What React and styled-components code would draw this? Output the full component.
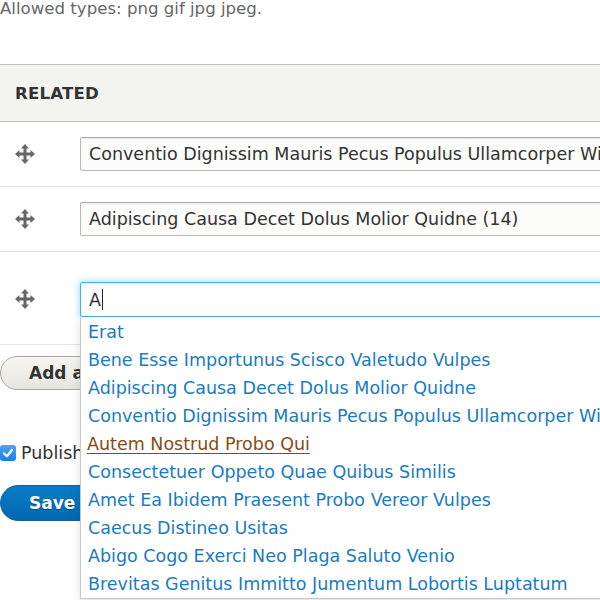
import React from "react";
import styled, { createGlobalStyle } from "styled-components";

const GlobalStyle = createGlobalStyle`
  html, body {
    margin: 0;
    padding: 0;
    width: 600px;
    height: 600px;
    overflow: hidden;
    background: #fff;
  }
  body {
    font-family: "DejaVu Sans", "Lucida Grande", sans-serif;
    color: #333;
  }
`;

const related = [
  "Conventio Dignissim Mauris Pecus Populus Ullamcorper Wisi (23)",
  "Adipiscing Causa Decet Dolus Molior Quidne (14)",
];

const suggestions = [
  "Erat",
  "Bene Esse Importunus Scisco Valetudo Vulpes",
  "Adipiscing Causa Decet Dolus Molior Quidne",
  "Conventio Dignissim Mauris Pecus Populus Ullamcorper Wisi",
  "Autem Nostrud Probo Qui",
  "Consectetuer Oppeto Quae Quibus Similis",
  "Amet Ea Ibidem Praesent Probo Vereor Vulpes",
  "Caecus Distineo Usitas",
  "Abigo Cogo Exerci Neo Plaga Saluto Venio",
  "Brevitas Genitus Immitto Jumentum Lobortis Luptatum",
];

function DragIcon() {
  return (
    <svg width="20" height="20" viewBox="0 0 20 20">
      <g fill="#666">
        <rect x="8.5" y="3" width="3" height="14" />
        <rect x="3" y="8.5" width="14" height="3" />
        <polygon points="10,0 14,4.5 6,4.5" />
        <polygon points="10,20 14,15.5 6,15.5" />
        <polygon points="0,10 4.5,6 4.5,14" />
        <polygon points="20,10 15.5,6 15.5,14" />
      </g>
    </svg>
  );
}

export default function App() {
  return (
    <>
      <GlobalStyle />
      <Page>
        <Description>Allowed types: png gif jpg jpeg.</Description>
        <Table>
          <Header>RELATED</Header>
          {related.map((title) => (
            <Row key={title}>
              <Handle>
                <DragIcon />
              </Handle>
              <Field>{title}</Field>
            </Row>
          ))}
          <Row $tall>
            <Handle>
              <DragIcon />
            </Handle>
            <FieldWrap>
              <Field $focused>
                A<Caret />
              </Field>
              <Suggestions>
                {suggestions.map((s, i) => (
                  <Suggestion key={s} $hover={i === 4}>
                    {s}
                  </Suggestion>
                ))}
              </Suggestions>
            </FieldWrap>
          </Row>
        </Table>
        <Actions>
          <Button>Add another item</Button>
        </Actions>
        <CheckRow>
          <Checkbox>
            <svg width="12" height="12" viewBox="0 0 12 12">
              <path d="M2 6.5 L5 9.2 L10 2.8" fill="none" stroke="#fff" strokeWidth="2.2" strokeLinecap="round" strokeLinejoin="round" />
            </svg>
          </Checkbox>
          <CheckLabel>Published</CheckLabel>
        </CheckRow>
        <Button $primary>Save</Button>
      </Page>
    </>
  );
}

const Page = styled.div`
  width: 760px;
`;

const Description = styled.div`
  font-size: 16.6px;
  line-height: 18px;
  color: #666;
`;

const Table = styled.div`
  margin-top: 46px;
  border-top: 1px solid #bfbfba;
`;

const Header = styled.div`
  height: 56px;
  display: flex;
  align-items: center;
  padding-left: 15px;
  background: #f3f3f0;
  border-bottom: 1px solid #bfbfba;
  font-size: 16.6px;
  font-weight: bold;
  color: #333;
  letter-spacing: 0.2px;
`;

const Row = styled.div`
  display: flex;
  align-items: ${(p) => (p.$tall ? "flex-start" : "center")};
  padding: ${(p) => (p.$tall ? "30px 0 27px" : "15px 0")};
  border-bottom: 1px solid #e6e4df;
`;

const Handle = styled.div`
  width: 80px;
  display: flex;
  padding-left: 15px;
  box-sizing: border-box;
  align-items: center;
  height: 34px;
`;

const FieldWrap = styled.div`
  position: relative;
`;

const Field = styled.div`
  box-sizing: border-box;
  width: 640px;
  height: ${(p) => (p.$focused ? "35px" : "34px")};
  display: flex;
  align-items: center;
  padding-left: 8px;
  white-space: nowrap;
  overflow: hidden;
  font-size: 17.5px;
  color: #333;
  background: ${(p) => (p.$focused ? "#fff" : "#fcfcfa")};
  border: 1px solid ${(p) => (p.$focused ? "#40b0f0" : "#b8b8b8")};
  border-top-color: ${(p) => (p.$focused ? "#40b0f0" : "#a8a8a8")};
  border-radius: 2px;
  box-shadow: ${(p) =>
    p.$focused
      ? "0 0 6px 1px rgba(64, 176, 240, 0.45)"
      : "inset 0 1px 2px rgba(0, 0, 0, 0.08)"};
`;

const Caret = styled.span`
  display: inline-block;
  width: 1px;
  height: 21px;
  margin-left: 1px;
  background: #222;
`;

const Suggestions = styled.ul`
  position: absolute;
  top: 35px;
  left: 0;
  width: 640px;
  margin: 0;
  padding: 1px 0 0;
  list-style: none;
  background: #fff;
  border: 1px solid #c8c8c8;
  border-top: none;
  box-shadow: 0 4px 10px rgba(0, 0, 0, 0.12);
  z-index: 10;
`;

const Suggestion = styled.li`
  height: 28px;
  line-height: 28px;
  padding-left: ${(p) => (p.$hover ? "6px" : "7px")};
  font-size: 17.5px;
  white-space: nowrap;
  color: ${(p) => (p.$hover ? "#8a4b13" : "#1a7bc2")};
  text-decoration: ${(p) => (p.$hover ? "underline" : "none")};
  text-underline-offset: 3px;
`;

const Actions = styled.div`
  padding-top: 11px;
`;

const Button = styled.div`
  display: inline-flex;
  align-items: center;
  box-sizing: border-box;
  height: ${(p) => (p.$primary ? "36px" : "34px")};
  padding: 0 28px;
  margin-top: ${(p) => (p.$primary ? "22px" : "0")};
  border-radius: 20px;
  font-size: 17px;
  font-weight: bold;
  color: ${(p) => (p.$primary ? "#fff" : "#333")};
  background: ${(p) =>
    p.$primary
      ? "linear-gradient(#0a7bc8, #0069b0)"
      : "linear-gradient(#f6f5f1, #e6e5df)"};
  border: 1px solid ${(p) => (p.$primary ? "#1e5c90" : "#a6a6a6")};
  text-shadow: ${(p) => (p.$primary ? "0 1px 0 #0b4a7a" : "0 1px 0 #fff")};
`;

const CheckRow = styled.div`
  display: flex;
  align-items: center;
  gap: 5px;
  margin-top: 53px;
`;

const Checkbox = styled.span`
  width: 16px;
  height: 16px;
  border-radius: 3px;
  display: flex;
  align-items: center;
  justify-content: center;
  background: linear-gradient(#4fa3f7, #1b7de9);
`;

const CheckLabel = styled.span`
  font-size: 17.5px;
  color: #333;
`;
